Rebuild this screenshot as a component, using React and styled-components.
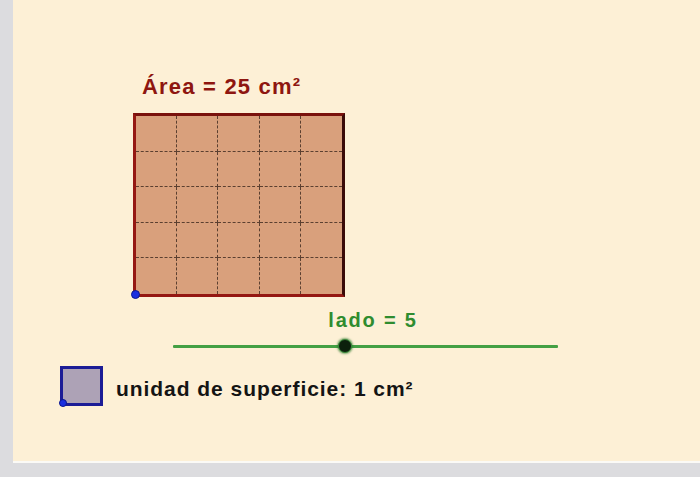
import React from "react"
import styled, { createGlobalStyle } from "styled-components"

const GlobalStyle = createGlobalStyle`
  html, body {
    margin: 0;
    padding: 0;
    background: #dcdcdf;
  }
  body {
    font-family: "Liberation Sans", Arial, sans-serif;
  }
`

const SIDE = 5

export default () => {
  const cells = Array.from({ length: SIDE * SIDE })

  return (
    <>
      <GlobalStyle />
      <Page>
        <Panel>
          <AreaLabel>Área = 25 cm²</AreaLabel>
          <Square>
            {cells.map((_, i) => (
              <Cell key={i} $lastCol={i % SIDE === SIDE - 1} $lastRow={i >= SIDE * (SIDE - 1)} />
            ))}
            <Point />
          </Square>
          <Slider>
            <SliderLabel>lado = 5</SliderLabel>
            <SliderRow>
              <Track />
              <Knob style={{ left: `${(172 / 385) * 100}%` }} />
            </SliderRow>
          </Slider>
          <Legend>
            <UnitSquare>
              <Point $small />
            </UnitSquare>
            <LegendText>unidad de superficie: 1 cm²</LegendText>
          </Legend>
        </Panel>
      </Page>
    </>
  )
}

const Page = styled.div`
  width: 700px;
  height: 477px;
  padding-left: 13px;
  box-sizing: border-box;
  overflow: hidden;
`

const Panel = styled.div`
  height: 463px;
  background: #fdf0d6;
  border-bottom: 2px solid #fbfaf6;
  display: flex;
  flex-direction: column;
  align-items: flex-start;
  padding-top: 74px;
  box-sizing: border-box;
`

const AreaLabel = styled.div`
  margin-left: 129px;
  font-size: 22px;
  line-height: 26px;
  font-weight: bold;
  letter-spacing: 1.2px;
  color: #8e1610;
`

const Square = styled.div`
  position: relative;
  margin-top: 13px;
  margin-left: 120px;
  width: 212px;
  height: 184px;
  box-sizing: border-box;
  border: 3px solid #951812;
  border-top-color: #7a120d;
  border-right-color: #3a0b08;
  background: #d9a07c;
  display: grid;
  grid-template-columns: repeat(${SIDE}, 1fr);
  grid-template-rows: repeat(${SIDE}, 1fr);
`

const Cell = styled.div`
  border-right: ${(p) => (p.$lastCol ? "none" : "1px dashed rgba(60, 40, 30, 0.8)")};
  border-bottom: ${(p) => (p.$lastRow ? "none" : "1px dashed rgba(60, 40, 30, 0.8)")};
`

const Point = styled.span`
  position: absolute;
  left: ${(p) => (p.$small ? "-4px" : "-5px")};
  bottom: ${(p) => (p.$small ? "-4px" : "-5px")};
  width: ${(p) => (p.$small ? "6px" : "7px")};
  height: ${(p) => (p.$small ? "6px" : "7px")};
  border-radius: 50%;
  background: #1a2ee0;
  border: 1px solid #0a1690;
`

const Slider = styled.div`
  margin-top: 11px;
  margin-left: 160px;
  width: 385px;
  display: flex;
  flex-direction: column;
  align-items: center;
`

const SliderLabel = styled.div`
  margin-left: 15px;
  font-size: 20px;
  line-height: 24px;
  letter-spacing: 1.8px;
  font-weight: bold;
  color: #2f8c2f;
`

const SliderRow = styled.div`
  position: relative;
  margin-top: 6px;
  width: 100%;
  height: 16px;
  display: flex;
  align-items: center;
`

const Track = styled.div`
  width: 100%;
  height: 3px;
  background: #44a044;
  border-radius: 1px;
`

const Knob = styled.span`
  position: absolute;
  top: 50%;
  width: 12px;
  height: 12px;
  margin-left: -7px;
  margin-top: -7px;
  border-radius: 50%;
  background: #0c200c;
  border: 1px solid #3a8a3a;
  box-shadow: 0 0 2px 1px rgba(40, 120, 40, 0.6);
`

const Legend = styled.div`
  margin-top: 12px;
  margin-left: 47px;
  display: flex;
  align-items: flex-start;
  gap: 13px;
`

const UnitSquare = styled.div`
  position: relative;
  width: 43px;
  height: 40px;
  box-sizing: border-box;
  border: 3px solid #1c1c96;
  background: #ada2b6;
`

const LegendText = styled.div`
  margin-top: 11px;
  font-size: 21px;
  line-height: 24px;
  font-weight: bold;
  letter-spacing: 0.95px;
  color: #141414;
`
